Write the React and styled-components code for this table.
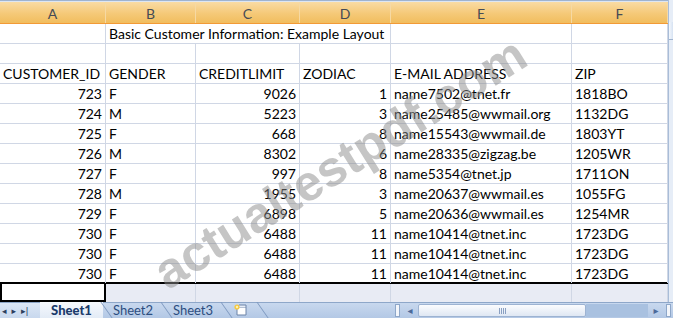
import React from "react";
import styled, { createGlobalStyle } from "styled-components";

const COLS = "106px 90px 104px 91px 181px 96px";

const rows = [
  [723, "F", 9026, 1, "name7502@tnet.fr", "1818BO"],
  [724, "M", 5223, 3, "name25485@wwmail.org", "1132DG"],
  [725, "F", 668, 8, "name15543@wwmail.de", "1803YT"],
  [726, "M", 8302, 6, "name28335@zigzag.be", "1205WR"],
  [727, "F", 997, 8, "name5354@tnet.jp", "1711ON"],
  [728, "M", 1955, 3, "name20637@wwmail.es", "1055FG"],
  [729, "F", 6898, 5, "name20636@wwmail.es", "1254MR"],
  [730, "F", 6488, 11, "name10414@tnet.inc", "1723DG"],
  [730, "F", 6488, 11, "name10414@tnet.inc", "1723DG"],
  [730, "F", 6488, 11, "name10414@tnet.inc", "1723DG"],
];

const Global = createGlobalStyle`
  html, body {
    margin: 0;
    padding: 0;
    background: #fff;
    overflow: hidden;
  }
  * { box-sizing: border-box; }
`;

const App = () => {
  return (
    <>
      <Global />
      <Frame>
        <Main>
          <SheetArea>
            <TopEdge />
            <HeaderRow>
              {["A", "B", "C", "D", "E", "F"].map((l) => (
                <ColHead key={l}>{l}</ColHead>
              ))}
            </HeaderRow>
            <Row>
              <Cell />
              <Cell $span={3}>Basic Customer Information: Example Layout</Cell>
              <Cell />
              <Cell />
            </Row>
            <Row>
              {Array.from({ length: 6 }).map((_, i) => (
                <Cell key={i} />
              ))}
            </Row>
            <Row>
              <Cell>CUSTOMER_ID</Cell>
              <Cell>GENDER</Cell>
              <Cell>CREDITLIMIT</Cell>
              <Cell>ZODIAC</Cell>
              <Cell>E-MAIL ADDRESS</Cell>
              <Cell>ZIP</Cell>
            </Row>
            {rows.map((r, i) => (
              <Row key={i} $last={i === rows.length - 1}>
                <Cell $num>{r[0]}</Cell>
                <Cell>{r[1]}</Cell>
                <Cell $num>{r[2]}</Cell>
                <Cell $num>{r[3]}</Cell>
                <Cell>{r[4]}</Cell>
                <Cell>{r[5]}</Cell>
              </Row>
            ))}
            <BlankRow>
              <ActiveCell />
              {Array.from({ length: 5 }).map((_, i) => (
                <SelCell key={i} />
              ))}
            </BlankRow>
            <Watermark>actualtestpdf.com</Watermark>
          </SheetArea>
          <VScroll>
            <VArrow />
          </VScroll>
        </Main>
        <TabBar>
          <Nav>
            <NavBtn>◂</NavBtn>
            <NavBtn>▸</NavBtn>
            <NavBtn>▸|</NavBtn>
          </Nav>
          <Tabs>
            <Tab $active>Sheet1</Tab>
            <Tab>Sheet2</Tab>
            <Tab>Sheet3</Tab>
            <Tab $icon>
              <svg width="16" height="13" viewBox="0 0 16 13">
                <path d="M4 3h9v8H4z" fill="#fff" stroke="#6d84a8" strokeWidth="1" />
                <path d="M4 3l2-2h7v2" fill="#e8eef8" stroke="#6d84a8" strokeWidth="1" />
                <circle cx="4" cy="3" r="2.6" fill="#f7c840" />
                <circle cx="4" cy="3" r="1.2" fill="#fff3b0" />
              </svg>
            </Tab>
          </Tabs>
          <HScroll>
            <Splitter />
            <HArrow>◂</HArrow>
            <Thumb>
              <Grip />
            </Thumb>
            <Track />
            <HArrow>▸</HArrow>
            <Splitter />
          </HScroll>
        </TabBar>
      </Frame>
    </>
  );
};

export default App;

const Frame = styled.div`
  width: 673px;
  height: 318px;
  display: flex;
  flex-direction: column;
  font-family: Lato, "Liberation Sans", sans-serif;
  font-size: 14px;
  color: #000;
  overflow: hidden;
`;

const Main = styled.div`
  display: flex;
  height: 302px;
`;

const SheetArea = styled.div`
  position: relative;
  width: 668px;
  overflow: hidden;
`;

const TopEdge = styled.div`
  height: 2px;
  background: #9fb3cf;
  border-bottom: 1px solid #dde6f2;
`;

const HeaderRow = styled.div`
  display: grid;
  grid-template-columns: ${COLS};
  height: 22px;
  background: linear-gradient(#f9dba4, #f5c978 55%, #f1bd5e);
  border-bottom: 1px solid #f29a36;
`;

const ColHead = styled.div`
  display: flex;
  align-items: center;
  justify-content: center;
  border-right: 1px solid #f6d9a3;
  color: #454a55;
  font-size: 14px;
  padding-top: 1px;
`;

const Row = styled.div`
  display: grid;
  grid-template-columns: ${COLS};
  height: 20px;
  border-bottom: ${({ $last }) =>
    $last ? "2px solid #000" : "1px solid #d0d7e5"};
`;

const Cell = styled.div`
  grid-column: span ${({ $span }) => $span || 1};
  border-right: 1px solid #d0d7e5;
  padding: 0 3px;
  line-height: 19px;
  white-space: nowrap;
  text-align: ${({ $num }) => ($num ? "right" : "left")};
`;

const BlankRow = styled.div`
  display: grid;
  grid-template-columns: ${COLS};
  height: 18px;
`;

const ActiveCell = styled.div`
  border: 2px solid #000;
  border-top: none;
  background: #fff;
`;

const SelCell = styled.div`
  background: #e8ebf4;
  border-right: 1px solid #d0d7e5;
`;

const Watermark = styled.div`
  position: absolute;
  left: 124px;
  top: 134px;
  width: 432px;
  text-align: center;
  transform: rotate(-32deg);
  font-family: "Liberation Sans", Arial, sans-serif;
  font-weight: bold;
  font-size: 50px;
  line-height: 58px;
  color: rgba(140, 140, 140, 0.5);
  white-space: nowrap;
  pointer-events: none;
`;

const VScroll = styled.div`
  width: 5px;
  background: #e6edf7;
  border-left: 1px solid #a9bdd8;
`;

const VArrow = styled.div`
  height: 18px;
  margin-top: 22px;
  background: linear-gradient(90deg, #f4f8fd, #d6e2f2);
  border-bottom: 1px solid #9fb3cf;
`;

const TabBar = styled.div`
  display: flex;
  height: 16px;
  background: linear-gradient(#c8d8ee, #b3c8e5);
  border-top: 1px solid #8ea7c9;
`;

const Nav = styled.div`
  display: flex;
  align-items: center;
  width: 40px;
  padding-left: 2px;
  gap: 5px;
  background: linear-gradient(#dce7f5, #c8d8ee);
`;

const NavBtn = styled.span`
  font-size: 9px;
  color: #2c3f5e;
  font-family: "DejaVu Sans", sans-serif;
`;

const Tabs = styled.div`
  display: flex;
  width: 353px;
`;

const Tab = styled.div`
  position: relative;
  display: flex;
  align-items: center;
  justify-content: center;
  width: ${({ $active, $icon }) => ($icon ? "36px" : $active ? "63px" : "60px")};
  font-family: Lato, "Liberation Sans", sans-serif;
  font-size: 13px;
  font-weight: ${({ $active }) => ($active ? 900 : 400)};
  color: ${({ $active }) => ($active ? "#1a3a6b" : "#2c4d7f")};
  background: ${({ $active }) =>
    $active ? "linear-gradient(#f6f9fd, #e3ebf6)" : "transparent"};
  margin-top: -1px;
  &::after {
    content: "";
    position: absolute;
    right: -4px;
    top: 0;
    bottom: 0;
    width: 1px;
    background: #7d98bf;
    transform: skewX(35deg);
  }
`;

const HScroll = styled.div`
  display: flex;
  align-items: stretch;
  flex: 1;
  padding: 1px 0;
`;

const Splitter = styled.div`
  width: 5px;
  margin: 0 2px;
  background: #f3f6fb;
  border: 1px solid #8ea7c9;
`;

const HArrow = styled.div`
  width: 16px;
  display: flex;
  align-items: center;
  justify-content: center;
  font-size: 10px;
  color: #4b6a99;
  font-family: "DejaVu Sans", sans-serif;
`;

const Thumb = styled.div`
  display: flex;
  align-items: center;
  justify-content: center;
  width: 168px;
  background: linear-gradient(#fbfcfe, #dfe7f3);
  border: 1px solid #9db3d2;
  border-radius: 2px;
`;

const Grip = styled.div`
  width: 7px;
  height: 6px;
  background: repeating-linear-gradient(90deg, #8aa0c2 0 1px, transparent 1px 2px);
`;

const Track = styled.div`
  flex: 1;
  background: #a9c1e0;
`;
